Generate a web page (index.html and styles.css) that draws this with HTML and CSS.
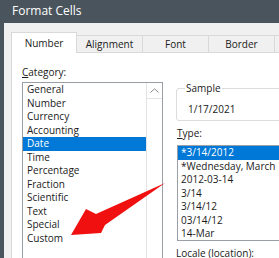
FILE: index.html
```html
<!DOCTYPE html>
<html lang="en">
<head>
    <meta charset="UTF-8">
    <title>Format Cells</title>
    <link rel="stylesheet" href="styles.css">
</head>
<body>
    <div class="window">
        <div class="titlebar">Format Cells</div>
        <div class="dialog">
            <div class="tabs">
                <div class="tab active">Number</div>
                <div class="tab">Alignment</div>
                <div class="tab">Font</div>
                <div class="tab">Border</div>
                <div class="tab"></div>
            </div>
            <div class="panel">
                <div class="left-col">
                    <div class="label"><u>C</u>ategory:</div>
                    <div class="listbox">
                        <ul class="items">
                            <li>General</li>
                            <li>Number</li>
                            <li>Currency</li>
                            <li>Accounting</li>
                            <li class="selected">Date</li>
                            <li>Time</li>
                            <li>Percentage</li>
                            <li>Fraction</li>
                            <li>Scientific</li>
                            <li>Text</li>
                            <li>Special</li>
                            <li>Custom</li>
                        </ul>
                        <div class="scrollbar">
                            <div class="scroll-up">
                                <svg width="9" height="5" viewBox="0 0 9 5"><path d="M0.5 4.5 L4.5 0.8 L8.5 4.5" fill="none" stroke="#8a8a8a" stroke-width="1"/></svg>
                            </div>
                        </div>
                    </div>
                </div>
                <div class="right-col">
                    <fieldset class="sample">
                        <legend>Sample</legend>
                        <div class="sample-value">1/17/2021</div>
                    </fieldset>
                    <div class="label type-label"><u>T</u>ype:</div>
                    <ul class="typelist">
                        <li class="selected">*3/14/2012</li>
                        <li>*Wednesday, March 14, 2012</li>
                        <li>2012-03-14</li>
                        <li>3/14</li>
                        <li>3/14/12</li>
                        <li>03/14/12</li>
                        <li>14-Mar</li>
                    </ul>
                    <div class="label locale-label"><u>L</u>ocale (location):</div>
                </div>
            </div>
        </div>
        <svg class="arrow" width="279" height="258" viewBox="0 0 279 258">
            <path d="M165 183 L96 214 L86 209 L71 235 L101 233 L105 225 Z" fill="#f01010"/>
        </svg>
    </div>
</body>
</html>
```

FILE: styles.css
```css
* { margin: 0; padding: 0; box-sizing: border-box; }
body {
    font-family: "Open Sans", "Noto Sans", sans-serif;
    font-size: 10px;
    color: #1a1a1a;
    background: #4a545c;
    width: 279px;
    height: 258px;
    overflow: hidden;
}
.window { position: relative; width: 279px; height: 258px; overflow: hidden; }
.titlebar {
    height: 23px;
    line-height: 21px;
    padding-left: 12px;
    color: #fff;
    font-size: 12px;
}
.dialog {
    margin-left: 4px;
    height: 235px;
    background: #f0f0f0;
    padding: 9px 0 0 7px;
}
.tabs { display: flex; align-items: flex-end; margin-bottom: -1px; position: relative; z-index: 1; }
.tab {
    flex: none;
    width: 66px;
    height: 18px;
    line-height: 17px;
    text-align: center;
    border: 1px solid #d9d9d9;
    border-left: none;
    background: #f0f0f0;
    white-space: nowrap;
}
.tab.active {
    height: 21px;
    line-height: 21px;
    background: #fff;
    border-left: 1px solid #d9d9d9;
    border-bottom: none;
}
.panel {
    display: flex;
    align-items: flex-start;
    background: #fff;
    border: 1px solid #d9d9d9;
    height: 220px;
    padding-left: 10px;
    width: 300px;
}
.label { line-height: 14px; white-space: nowrap; }
.left-col { flex: none; }
.left-col .label { margin-top: 12px; margin-bottom: 3px; }
.listbox {
    display: flex;
    width: 141px;
    height: 190px;
    border: 1px solid #9a9ea5;
}
.items { list-style: none; flex: 1; }
.items li, .typelist li {
    height: 13.5px;
    line-height: 13.5px;
    padding-left: 4px;
    white-space: nowrap;
}
.items li.selected, .typelist li.selected { background: #0078d7; color: #fff; }
.scrollbar {
    flex: none;
    width: 16px;
    border-left: 1px solid #e3e3e3;
}
.scroll-up {
    height: 16px;
    border-bottom: 1px solid #e3e3e3;
    display: flex;
    justify-content: center;
    align-items: center;
}
.right-col { flex: none; margin-left: 13px; margin-top: 28px; width: 130px; }
.sample {
    border: 1px solid #dcdcdc;
    border-radius: 3px;
    padding: 0 0 0 8px;
    height: 40px;
}
.sample legend { padding: 0 1px; line-height: 14px; }
.sample-value { margin-top: 7px; padding-left: 3px; line-height: 14px; }
.type-label { margin-top: 5px; margin-left: 1px; margin-bottom: 5px; }
.typelist {
    list-style: none;
    margin-left: 1px;
    height: 96px;
    border: 1px solid #9a9ea5;
    border-right: none;
}
.typelist li { padding-left: 3px; }
.locale-label { margin-top: 5px; }
.arrow { position: absolute; top: 0; left: 0; pointer-events: none; }
```
